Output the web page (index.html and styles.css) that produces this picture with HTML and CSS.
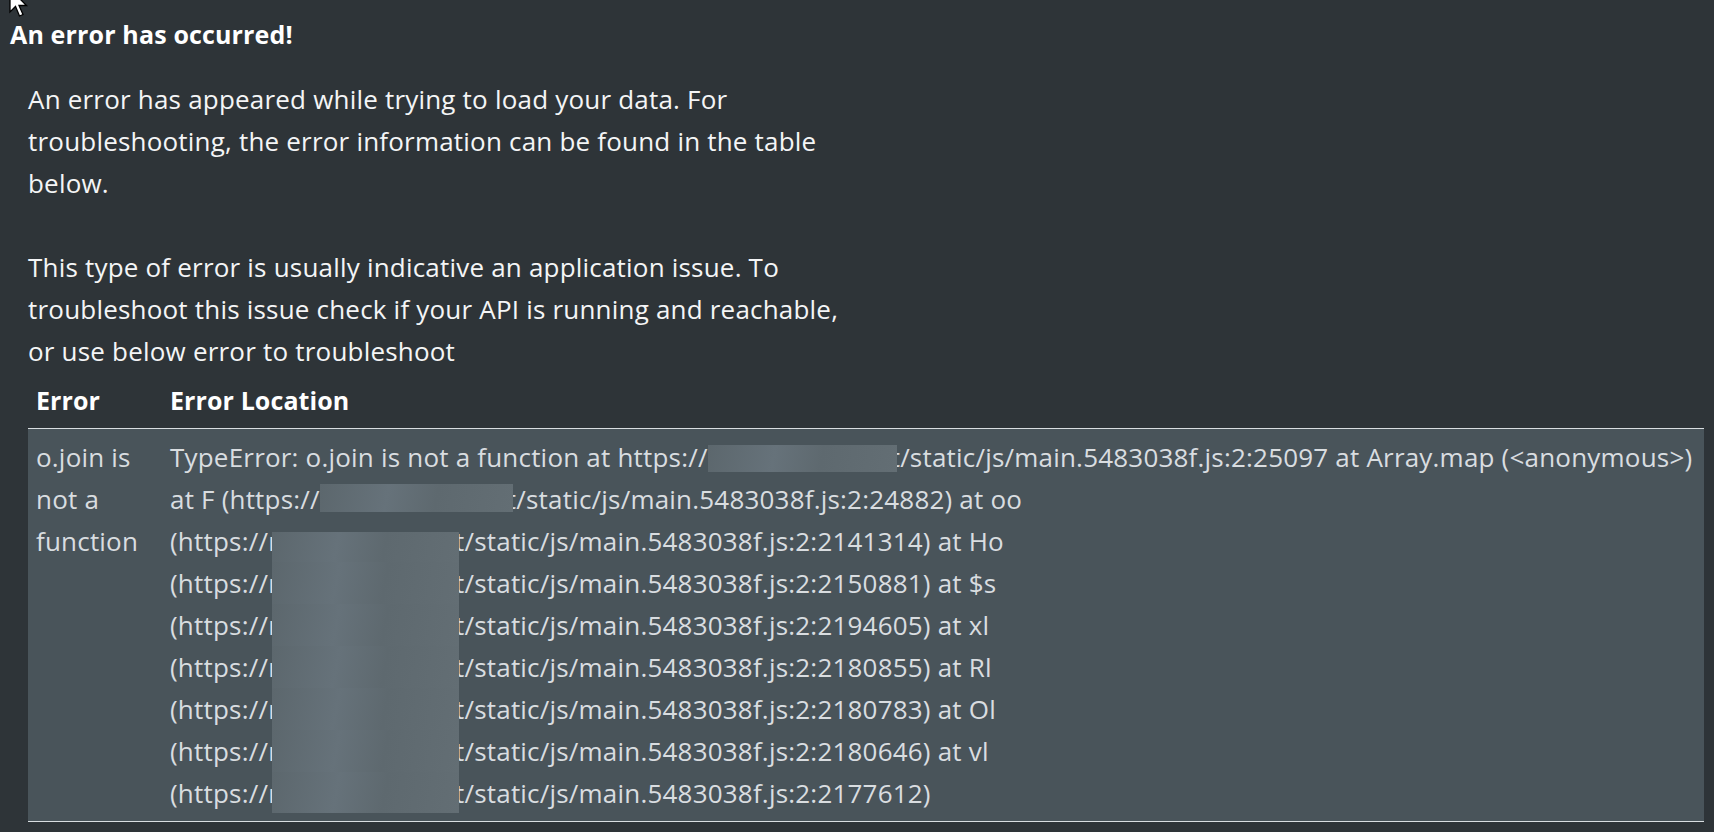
FILE: index.html
```html
<!DOCTYPE html>
<html lang="en">
<head>
<meta charset="utf-8">
<title>Error</title>
<link rel="stylesheet" href="styles.css">
</head>
<body>
<svg class="cursor" width="20" height="30" viewBox="0 0 20 30" aria-hidden="true">
  <polygon points="1,1 1,24 6.5,18.5 10.5,28 14,26.5 10,17.5 17.5,17.5" fill="#ffffff" stroke="#000000" stroke-width="1.3" stroke-linejoin="miter"/>
</svg>
<h1 class="title">An error has occurred!</h1>
<div class="content">
  <p class="msg">An error has appeared while trying to load your data. For<br>troubleshooting, the error information can be found in the table<br>below.</p>
  <p class="msg">This type of error is usually indicative an application issue. To<br>troubleshoot this issue check if your API is running and reachable,<br>or use below error to troubleshoot</p>
  <table class="err-table">
    <colgroup><col class="col-err"><col></colgroup>
    <thead>
      <tr><th>Error</th><th>Error Location</th></tr>
    </thead>
    <tbody>
      <tr>
        <td>o.join is not a function</td>
        <td>
          <div class="ln">TypeError: o.join is not a function at https://<span class="redact r1"></span>t/static/js/main.5483038f.js:2:25097 at Array.map (&lt;anonymous&gt;)</div>
          <div class="ln">at F (https://<span class="redact r2"></span>t/static/js/main.5483038f.js:2:24882) at oo</div>
          <div class="ln">(https://r<span class="redact r3 first"></span>t/static/js/main.5483038f.js:2:2141314) at Ho</div>
          <div class="ln">(https://r<span class="redact r3"></span>t/static/js/main.5483038f.js:2:2150881) at $s</div>
          <div class="ln">(https://r<span class="redact r3"></span>t/static/js/main.5483038f.js:2:2194605) at xl</div>
          <div class="ln">(https://r<span class="redact r3"></span>t/static/js/main.5483038f.js:2:2180855) at Rl</div>
          <div class="ln">(https://r<span class="redact r3"></span>t/static/js/main.5483038f.js:2:2180783) at Ol</div>
          <div class="ln">(https://r<span class="redact r3"></span>t/static/js/main.5483038f.js:2:2180646) at vl</div>
          <div class="ln">(https://r<span class="redact r3 last"></span>t/static/js/main.5483038f.js:2:2177612)</div>
        </td>
      </tr>
    </tbody>
  </table>
</div>
</body>
</html>
```
FILE: styles.css
```css
html, body {
  margin: 0;
  padding: 0;
  background: #2e3438;
}
body {
  font-family: "Open Sans", "Noto Sans", sans-serif;
  font-size: 26px;
  letter-spacing: 0.2px;
  line-height: 42px;
  color: #f4f5f6;
  overflow: hidden;
  height: 832px;
}
.cursor {
  position: absolute;
  left: 9px;
  top: -12px;
}
.title {
  margin: 0;
  padding: 13px 0 0 10px;
  font-size: 25px;
  letter-spacing: 0.15px;
  line-height: 42px;
  font-weight: 700;
  color: #ffffff;
}
.content {
  margin: 23px 10px 0 28px;
}
.msg {
  margin: 0 0 42px 0;
}
.msg:last-of-type {
  margin-bottom: 0;
}
.err-table {
  width: 100%;
  table-layout: fixed;
  border-collapse: collapse;
  border-bottom: 1px solid #d9dde0;
}
.col-err {
  width: 134px;
}
.err-table th {
  text-align: left;
  font-size: 25px;
  letter-spacing: 0.1px;
  font-weight: 700;
  color: #ffffff;
  padding: 7px 8px;
  border-bottom: 1px solid #d9dde0;
  vertical-align: top;
}
.err-table td {
  background: #49545a;
  color: #d9dde0;
  padding: 7px 8px;
  vertical-align: top;
}
.ln {
  white-space: nowrap;
}
.redact {
  display: inline-block;
  position: relative;
  z-index: 1;
  vertical-align: top;
  background: linear-gradient(100deg, #5c676d 0%, #66727a 35%, #5e696f 60%, #636e74 100%);
}
.r1 {
  width: 189px;
  height: 27px;
  margin-top: 9px;
  margin-right: -6px;
}
.r2 {
  width: 193px;
  height: 28px;
  margin-top: 6px;
  margin-right: -6px;
}
.r3 {
  width: 187px;
  height: 42px;
  margin-left: -7px;
  margin-right: -4px;
}
.r3.first {
  height: 30px;
  margin-top: 12px;
}
.r3.last {
  height: 41px;
}
```
